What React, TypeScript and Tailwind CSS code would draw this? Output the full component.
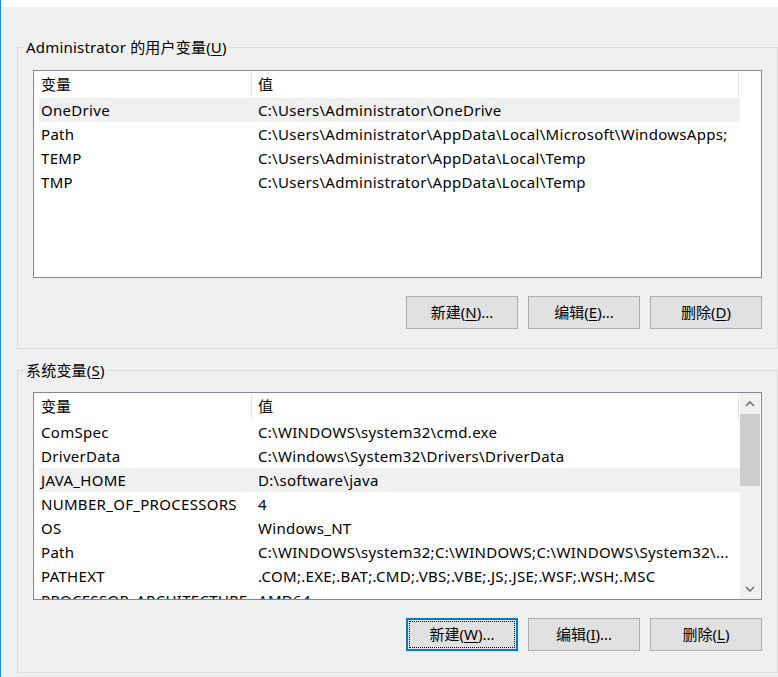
import type { ReactNode } from 'react';

const userVars: [string, string][] = [
  ['OneDrive', 'C:\\Users\\Administrator\\OneDrive'],
  ['Path', 'C:\\Users\\Administrator\\AppData\\Local\\Microsoft\\WindowsApps;'],
  ['TEMP', 'C:\\Users\\Administrator\\AppData\\Local\\Temp'],
  ['TMP', 'C:\\Users\\Administrator\\AppData\\Local\\Temp'],
];

const systemVars: [string, string][] = [
  ['ComSpec', 'C:\\WINDOWS\\system32\\cmd.exe'],
  ['DriverData', 'C:\\Windows\\System32\\Drivers\\DriverData'],
  ['JAVA_HOME', 'D:\\software\\java'],
  ['NUMBER_OF_PROCESSORS', '4'],
  ['OS', 'Windows_NT'],
  ['Path', 'C:\\WINDOWS\\system32;C:\\WINDOWS;C:\\WINDOWS\\System32\\...'],
  ['PATHEXT', '.COM;.EXE;.BAT;.CMD;.VBS;.VBE;.JS;.JSE;.WSF;.WSH;.MSC'],
  ['PROCESSOR_ARCHITECTURE', 'AMD64'],
];

function Key({ k }: { k: string }) {
  return <span className="underline underline-offset-2 decoration-1">{k}</span>;
}

function Chevron({ down }: { down?: boolean }) {
  return (
    <svg width="10" height="6" viewBox="0 0 10 6" className={down ? 'rotate-180' : ''}>
      <path d="M1 5 L5 1 L9 5" fill="none" stroke="#606060" strokeWidth="1.3" />
    </svg>
  );
}

function Scrollbar() {
  return (
    <div className="w-[20px] bg-[#f0f0f0] flex flex-col">
      <div className="h-[21px] flex items-center justify-center">
        <Chevron />
      </div>
      <div className="h-[72px] bg-[#cdcdcd]" />
      <div className="flex-1" />
      <div className="h-[21px] flex items-center justify-center">
        <Chevron down />
      </div>
    </div>
  );
}

function VarList({ rows, hot, scroll }: { rows: [string, string][]; hot: number; scroll?: boolean }) {
  return (
    <div className="h-[208px] border border-[#828790] bg-white flex overflow-hidden">
      <div className="w-[706px] flex flex-col overflow-hidden">
        <div className="h-[27px] shrink-0 flex">
          <div className="w-[217px] pl-[7px] flex items-center">变量</div>
          <div className="w-px my-[1px] bg-[#e5e5e5]" />
          <div className="w-[486px] pl-[6px] flex items-center">值</div>
          <div className="w-px my-[1px] bg-[#e5e5e5]" />
        </div>
        {rows.map(([name, value], i) => (
          <div
            key={name + i}
            className={`h-[24px] shrink-0 ml-[5px] flex items-center whitespace-nowrap tracking-[0.3px] ${i === hot ? 'bg-[#f0f0f0]' : ''}`}
          >
            <div className="w-[219px] pl-[2px]">{name}</div>
            <div className="flex-1">{value}</div>
          </div>
        ))}
      </div>
      {scroll && <Scrollbar />}
    </div>
  );
}

function WinButton({ children, focused }: { children: ReactNode; focused?: boolean }) {
  if (focused) {
    return (
      <button className="w-[112px] h-[33px] border-2 border-[#0078d7] bg-[#e1e1e1] p-px flex">
        <span className="flex-1 border border-dotted border-black flex items-center justify-center">
          {children}
        </span>
      </button>
    );
  }
  return (
    <button className="w-[112px] h-[33px] border border-[#adadad] bg-[#e1e1e1] flex items-center justify-center">
      {children}
    </button>
  );
}

function Group({ title, children, className }: { title: ReactNode; children: ReactNode; className: string }) {
  return (
    <fieldset className={`ml-[16px] w-[761px] border border-[#dcdcdc] ${className}`}>
      <legend className="ml-[6px] px-[2px] leading-[20px] tracking-[0.2px]">{title}</legend>
      {children}
    </fieldset>
  );
}

export default function App() {
  return (
    <div className="w-[778px] h-[677px] bg-[#f0f0f0] border-l border-[#2b88d8] overflow-hidden text-[15px] text-black font-[family-name:'Noto_Sans','Noto_Sans_CJK_SC',sans-serif]">
      <div className="h-[7px] bg-white" />

      <Group
        className="mt-[30px]"
        title={
          <>
            Administrator 的用户变量(<Key k="U" />)
          </>
        }
      >
        <div className="pt-[13px] px-[15px] pb-[19px]">
          <VarList rows={userVars} hot={0} />
          <div className="mt-[18px] flex justify-end gap-[10px]">
            <WinButton>
              新建(<Key k="N" />)...
            </WinButton>
            <WinButton>
              编辑(<Key k="E" />)...
            </WinButton>
            <WinButton>
              删除(<Key k="D" />)
            </WinButton>
          </div>
        </div>
      </Group>

      <Group
        className="mt-[11px]"
        title={
          <>
            系统变量(<Key k="S" />)
          </>
        }
      >
        <div className="pt-[12px] px-[15px] pb-[21px]">
          <VarList rows={systemVars} hot={2} scroll />
          <div className="mt-[18px] flex justify-end gap-[10px]">
            <WinButton focused>
              新建(<Key k="W" />)...
            </WinButton>
            <WinButton>
              编辑(<Key k="I" />)...
            </WinButton>
            <WinButton>
              删除(<Key k="L" />)
            </WinButton>
          </div>
        </div>
      </Group>
    </div>
  );
}
